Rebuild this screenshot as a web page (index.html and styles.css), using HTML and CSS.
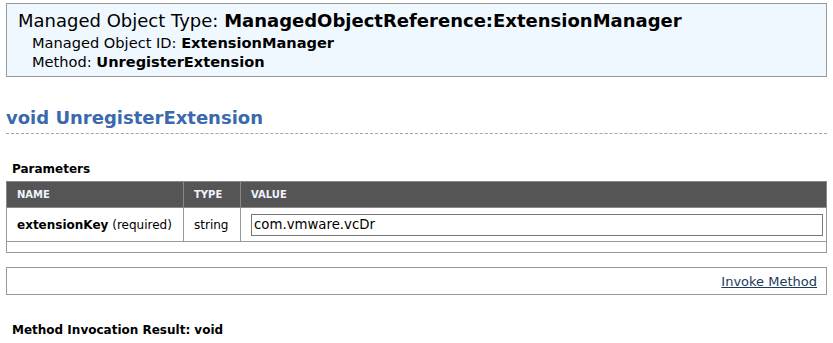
FILE: index.html
```html
<!DOCTYPE html>
<html>
<head>
<meta charset="utf-8">
<link rel="stylesheet" href="styles.css">
</head>
<body>
<div class="mo-box">
  <div class="mo-title">Managed Object Type: <b>ManagedObjectReference:ExtensionManager</b></div>
  <div class="mo-line mo-first">Managed Object ID: <b>ExtensionManager</b></div>
  <div class="mo-line">Method: <b>UnregisterExtension</b></div>
</div>
<h1 class="method-head">void UnregisterExtension</h1>
<div class="params-label">Parameters</div>
<table class="params">
  <thead>
    <tr><th class="c-name">NAME</th><th class="c-type">TYPE</th><th class="c-value">VALUE</th></tr>
  </thead>
  <tbody>
    <tr class="row">
      <td class="c-name"><b>extensionKey</b> (required)</td>
      <td class="c-type">string</td>
      <td class="c-value"><input class="val-input" type="text" value="com.vmware.vcDr"></td>
    </tr>
    <tr class="empty"><td colspan="3"></td></tr>
  </tbody>
</table>
<div class="invoke-box"><a class="invoke" href="#">Invoke Method</a></div>
<div class="result">Method Invocation Result: void</div>
</body>
</html>
```
FILE: styles.css
```css
html, body {
  margin: 0;
  padding: 0;
  background: #fff;
}
body {
  padding: 3px 6px 0 6px;
  font-family: "DejaVu Sans", Verdana, sans-serif;
  font-size: 12px;
  color: #000;
}
.mo-box {
  border: 1px solid #999;
  background: #f0f8ff;
  padding: 6px 11px 5px 11px;
}
.mo-title {
  font-size: 18px;
  line-height: 22px;
}
.mo-line {
  font-size: 14.6px;
  line-height: 19px;
  padding-left: 14px;
}
.mo-first {
  margin-top: 1px;
}
.method-head {
  margin: 30px 0 0 0;
  font-size: 18px;
  line-height: 22px;
  color: #3a69ad;
  font-weight: bold;
  padding-bottom: 4px;
  border-bottom: 1px dashed #9aa;
}
.params-label {
  font-weight: bold;
  margin: 28px 0 0 6px;
  line-height: 15px;
}
.params {
  width: 100%;
  border-collapse: collapse;
  margin-top: 4px;
  border: 1px solid #999;
}
.params th {
  background: #555;
  color: #eef4ff;
  font-size: 10px;
  font-weight: bold;
  text-align: left;
  height: 25px;
  padding: 0 10px;
  border: 1px solid #888;
}
.params td {
  border: 1px solid #999;
  padding: 0 10px;
  height: 33px;
}
.c-name { width: 156px; }
.c-type { width: 36px; }
.params td.c-value { padding: 0 3px 0 10px; }
.val-input {
  box-sizing: border-box;
  width: 100%;
  height: 22px;
  border: 1px solid #777;
  font-family: "DejaVu Sans", Verdana, sans-serif;
  font-size: 13.3px;
  padding: 1px 2px;
  margin: 0;
  display: block;
}
.params tr.empty td {
  height: 10px;
  padding: 0;
}
.invoke-box {
  margin-top: 14px;
  border: 1px solid #999;
  height: 26px;
  display: flex;
  align-items: center;
  justify-content: flex-end;
  padding-right: 9px;
}
.invoke {
  color: #1c3b5c;
  font-size: 13px;
  text-decoration: underline;
}
.result {
  font-weight: bold;
  margin: 28px 0 0 6px;
}
```
